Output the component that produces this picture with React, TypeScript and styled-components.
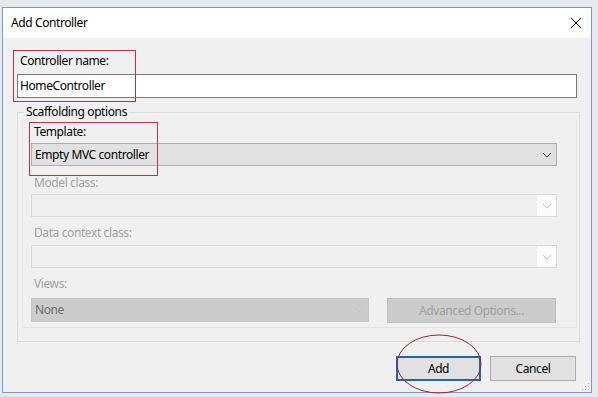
import React from "react";
import styled, { createGlobalStyle } from "styled-components";

const GlobalStyle = createGlobalStyle`
  html, body {
    margin: 0;
    padding: 0;
    background: #e6eaef;
  }
  body {
    font-family: "Segoe UI", "Noto Sans", sans-serif;
    font-size: 12px;
    letter-spacing: -0.4px;
    color: #000;
  }
  * {
    box-sizing: border-box;
  }
`;

const Page = styled.div`
  width: 598px;
  height: 397px;
  padding: 7px 0 0 2px;
  overflow: hidden;
`;

const Window = styled.div`
  position: relative;
  width: 590px;
  height: 386px;
  border: 1px solid #7a9cc0;
  background: #f0f0f0;
  display: flex;
  flex-direction: column;
`;

const TitleBar = styled.div`
  height: 30px;
  flex: none;
  background: #fff;
  display: flex;
  align-items: center;
  justify-content: space-between;
  padding: 0 8px 0 8px;
`;

const Title = styled.span`
  line-height: 16px;
`;

const CloseButton = styled.button`
  border: 0;
  background: transparent;
  padding: 0;
  width: 14px;
  height: 14px;
  display: flex;
  align-items: center;
  justify-content: center;
`;

const Body = styled.div`
  flex: 1;
  display: flex;
  flex-direction: column;
  padding: 0 15px 0 14px;
`;

const Label = styled.div<{ $top?: number; $gap?: number; $disabled?: boolean }>`
  line-height: 16px;
  padding-left: 3px;
  margin-top: ${(p) => p.$top ?? 0}px;
  margin-bottom: ${(p) => p.$gap ?? 3}px;
  color: ${(p) => (p.$disabled ? "#a3a3a3" : "#000")};
`;

const TextInput = styled.div`
  width: 560px;
  height: 24px;
  border: 1px solid #7a7a7a;
  background: #fff;
  padding-left: 2px;
  display: flex;
  align-items: center;
  line-height: 16px;
`;

const Group = styled.fieldset`
  margin: 6px 0 0 0;
  width: 563px;
  border: 1px solid #dcdcdc;
  padding: 0 2px 13px 4px;
`;

const Legend = styled.legend`
  margin-left: 2px;
  padding: 0 2px;
  line-height: 16px;
`;

const Panel = styled.div`
  border: 1px solid #e2e2e2;
  border-top-color: transparent;
  padding: 3px 19px 4px 8px;
`;

type SelectTone = "normal" | "disabled" | "grayed";

const Select = styled.div<{ $tone: SelectTone; $width?: number }>`
  width: ${(p) => (p.$width ? `${p.$width}px` : "100%")};
  height: ${(p) => (p.$tone === "grayed" ? 24 : 23)}px;
  display: flex;
  align-items: center;
  line-height: 16px;
  padding-left: 3px;
  border: 1px solid
    ${(p) =>
      p.$tone === "normal" ? "#adadad" : p.$tone === "grayed" ? "#c6c6c6" : "#d9d9d9"};
  background: ${(p) =>
    p.$tone === "normal" ? "#e1e1e1" : p.$tone === "grayed" ? "#cccccc" : "#efefef"};
  color: ${(p) => (p.$tone === "grayed" ? "#6d6d6d" : "#000")};
`;

const SelectText = styled.span`
  flex: 1;
`;

const ChevronBox = styled.div<{ $tone: SelectTone }>`
  width: 19px;
  align-self: stretch;
  display: flex;
  align-items: center;
  justify-content: center;
  background: ${(p) => (p.$tone === "disabled" ? "#fbfbfb" : "transparent")};
`;

const ViewsRow = styled.div`
  display: flex;
  align-items: flex-start;
  gap: 18px;
`;

const Button = styled.button<{ $variant?: "default" | "primary" | "disabled"; $width: number }>`
  width: ${(p) => p.$width}px;
  height: 25px;
  font-family: inherit;
  font-size: 12px;
  letter-spacing: inherit;
  line-height: 16px;
  padding: 0;
  background: ${(p) => (p.$variant === "disabled" ? "#cccccc" : "#e1e1e1")};
  color: ${(p) => (p.$variant === "disabled" ? "#a0a0a0" : "#000")};
  border: ${(p) =>
    p.$variant === "primary"
      ? "2px solid #1f64b4"
      : p.$variant === "disabled"
      ? "1px solid #bfbfbf"
      : "1px solid #adadad"};
`;

const ButtonRow = styled.div`
  display: flex;
  justify-content: flex-end;
  gap: 9px;
  margin-top: 14px;
`;

const Annotation = styled.div<{ $x: number; $y: number; $w: number; $h: number }>`
  position: absolute;
  left: ${(p) => p.$x}px;
  top: ${(p) => p.$y}px;
  width: ${(p) => p.$w}px;
  height: ${(p) => p.$h}px;
  border: 1px solid #d22a3e;
  pointer-events: none;
`;

const EllipseMark = styled.svg`
  position: absolute;
  left: 392px;
  top: 325px;
  pointer-events: none;
`;

const Grip = styled.svg`
  position: absolute;
  right: 1px;
  bottom: 1px;
`;

const Chevron = ({ color }: { color: string }) => (
  <svg width="10" height="6" viewBox="0 0 10 6">
    <path d="M1 1 L5 5 L9 1" fill="none" stroke={color} strokeWidth="1" />
  </svg>
);

const Dropdown = ({
  tone,
  value,
  width,
}: {
  tone: SelectTone;
  value?: string;
  width?: number;
}) => (
  <Select $tone={tone} $width={width}>
    <SelectText>{value}</SelectText>
    <ChevronBox $tone={tone}>
      <Chevron color={tone === "normal" ? "#404040" : "#c4c4c4"} />
    </ChevronBox>
  </Select>
);

export default function App() {
  return (
    <Page>
      <GlobalStyle />
      <Window>
        <TitleBar>
          <Title>Add Controller</Title>
          <CloseButton aria-label="Close">
            <svg width="12" height="12" viewBox="0 0 12 12">
              <path d="M1 1 L11 11 M11 1 L1 11" stroke="#000" strokeWidth="1" />
            </svg>
          </CloseButton>
        </TitleBar>
        <Body>
          <Label $top={15} $gap={5}>
            Controller name:
          </Label>
          <TextInput>HomeController</TextInput>
          <Group>
            <Legend>Scaffolding options</Legend>
            <Panel>
              <Label>Template:</Label>
              <Dropdown tone="normal" value="Empty MVC controller" />
              <Label $top={9} $disabled>
                Model class:
              </Label>
              <Dropdown tone="disabled" />
              <Label $top={8} $gap={4} $disabled>
                Data context class:
              </Label>
              <Dropdown tone="disabled" />
              <Label $top={8} $gap={6} $disabled>
                Views:
              </Label>
              <ViewsRow>
                <Dropdown tone="grayed" value="None" width={338} />
                <Button $variant="disabled" $width={169}>
                  Advanced Options...
                </Button>
              </ViewsRow>
            </Panel>
          </Group>
          <ButtonRow>
            <Button $variant="primary" $width={85}>
              Add
            </Button>
            <Button $width={86}>Cancel</Button>
          </ButtonRow>
        </Body>

        <Annotation $x={10} $y={42} $w={123} $h={52} />
        <Annotation $x={26} $y={114} $w={129} $h={54} />
        <EllipseMark width="88" height="62" viewBox="0 0 88 62">
          <ellipse cx="44" cy="31" rx="42" ry="29" fill="none" stroke="#9e2236" strokeWidth="1" />
        </EllipseMark>
        <Grip width="8" height="8" viewBox="0 0 8 8">
          <g fill="#b8b8b8">
            <rect x="6" y="0" width="1" height="1" />
            <rect x="3" y="3" width="1" height="1" />
            <rect x="6" y="3" width="1" height="1" />
            <rect x="0" y="6" width="1" height="1" />
            <rect x="3" y="6" width="1" height="1" />
            <rect x="6" y="6" width="1" height="1" />
          </g>
        </Grip>
      </Window>
    </Page>
  );
}
